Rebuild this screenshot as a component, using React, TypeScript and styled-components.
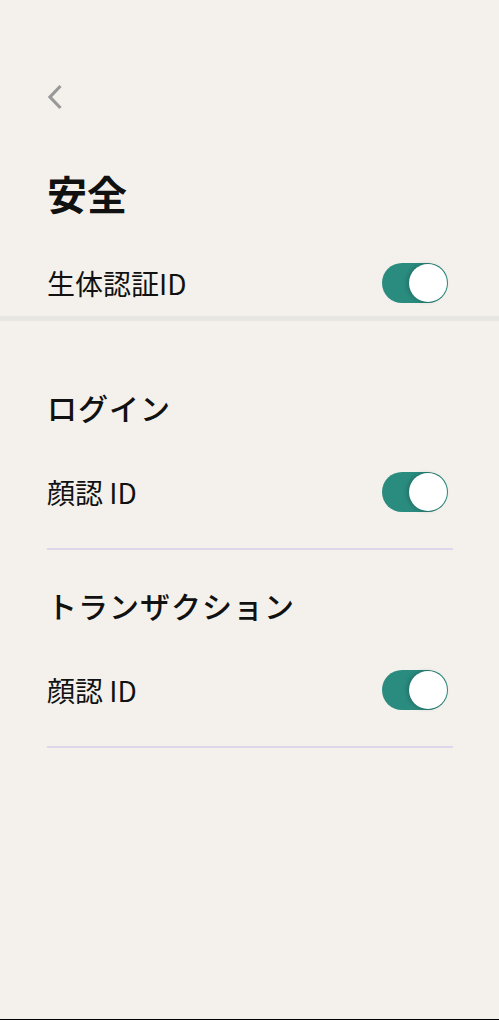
import styled, { createGlobalStyle } from 'styled-components'

const GlobalStyle = createGlobalStyle`
  html, body {
    margin: 0;
    padding: 0;
    background: #f4f1ec;
  }
  body {
    font-family: "Noto Sans CJK JP", "Noto Sans", sans-serif;
    color: #111;
  }
`

const Screen = styled.div`
  min-height: 1019px;
  background: #f4f1ec;
  border-bottom: 1px solid #000;
  display: flex;
  flex-direction: column;
`

const TopBlock = styled.div`
  display: flex;
  flex-direction: column;
  padding: 84px 46px 13px 47px;
`

const BackButton = styled.button`
  width: 16px;
  height: 26px;
  padding: 0;
  border: none;
  background: none;
  display: flex;
  cursor: pointer;
`

const Title = styled.h1`
  margin: 63px 0 0;
  height: 40px;
  line-height: 40px;
  font-size: 40px;
  font-weight: 700;
`

const Band = styled.div`
  height: 5px;
  background: #e8e6e2;
`

const Section = styled.section<{ $top: number }>`
  display: flex;
  flex-direction: column;
  padding: ${p => p.$top}px 46px 0 47px;
`

const SectionTitle = styled.h2`
  margin: 0;
  height: 40px;
  line-height: 40px;
  font-size: 30px;
  font-weight: 500;
  letter-spacing: 1px;
`

const Row = styled.div<{ $gap?: number }>`
  display: flex;
  align-items: center;
  justify-content: space-between;
  height: 40px;
  margin-top: ${p => p.$gap ?? 0}px;
  padding-right: 5px;
`

const Label = styled.span`
  font-size: 28px;
  line-height: 40px;
`

const Divider = styled.hr`
  margin: 36px 0 0;
  border: none;
  height: 2px;
  background: #dcd8ea;
`

const Track = styled.button`
  position: relative;
  width: 66px;
  height: 40px;
  padding: 0;
  border: none;
  border-radius: 20px;
  background: linear-gradient(90deg, #2a8b7f 0%, #2a8b7f 55%, #237a70 72%, #2a8b7f 100%);
  cursor: pointer;
`

const Knob = styled.span`
  position: absolute;
  top: 1px;
  right: 1px;
  width: 38px;
  height: 38px;
  border-radius: 50%;
  background: #fff;
  box-shadow: -2px 0 4px rgba(0, 0, 0, 0.18);
`

function Toggle() {
  return (
    <Track aria-pressed="true">
      <Knob />
    </Track>
  )
}

function ChevronLeft() {
  return (
    <svg width="16" height="26" viewBox="0 0 16 26" fill="none">
      <path d="M13.5 2 L3 13 L13.5 24" stroke="#999" strokeWidth="3.2" strokeLinecap="butt" strokeLinejoin="miter" />
    </svg>
  )
}

export default function App() {
  return (
    <Screen>
      <GlobalStyle />
      <TopBlock>
        <BackButton aria-label="戻る">
          <ChevronLeft />
        </BackButton>
        <Title>安全</Title>
        <Row $gap={50}>
          <Label>生体認証ID</Label>
          <Toggle />
        </Row>
      </TopBlock>
      <Band />
      <Section $top={66}>
        <SectionTitle>ログイン</SectionTitle>
        <Row $gap={45}>
          <Label>顔認 ID</Label>
          <Toggle />
        </Row>
        <Divider />
      </Section>
      <Section $top={35}>
        <SectionTitle>トランザクション</SectionTitle>
        <Row $gap={45}>
          <Label>顔認 ID</Label>
          <Toggle />
        </Row>
        <Divider />
      </Section>
    </Screen>
  )
}
